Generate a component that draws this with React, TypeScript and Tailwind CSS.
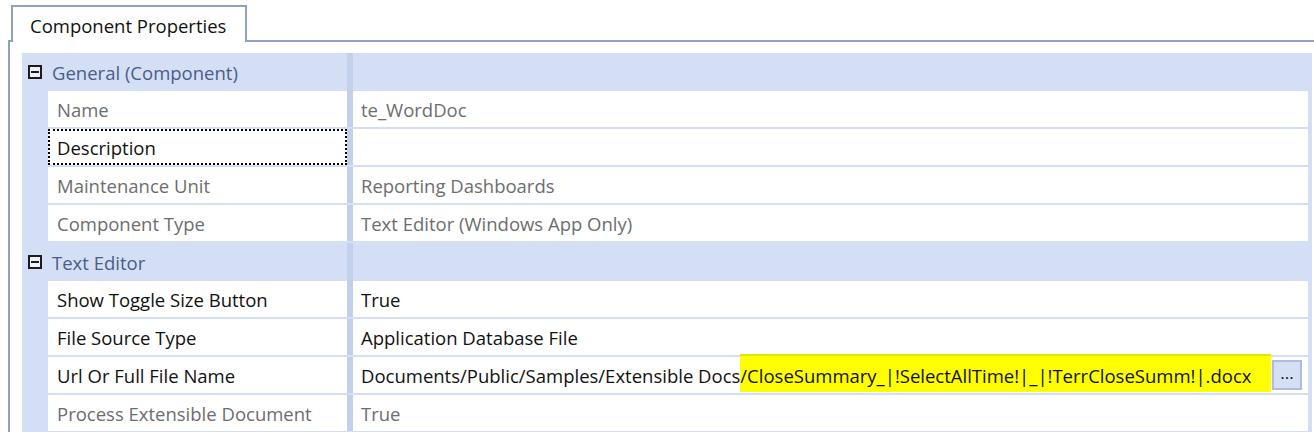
import React from 'react';

// Property grid rows
type Row = {
    label: string;
    value?: string;
    muted?: boolean;
    focused?: boolean;
    editor?: boolean;
};

type Group = { title: string; rows: Row[] };

const groups: Group[] = [
    {
        title: 'General (Component)',
        rows: [
            { label: 'Name', value: 'te_WordDoc', muted: true },
            { label: 'Description', value: '', focused: true },
            { label: 'Maintenance Unit', value: 'Reporting Dashboards', muted: true },
            { label: 'Component Type', value: 'Text Editor (Windows App Only)', muted: true },
        ],
    },
    {
        title: 'Text Editor',
        rows: [
            { label: 'Show Toggle Size Button', value: 'True' },
            { label: 'File Source Type', value: 'Application Database File' },
            { label: 'Url Or Full File Name', editor: true },
            { label: 'Process Extensible Document', value: 'True', muted: true },
        ],
    },
];

function CollapseBox() {
    return (
        <span className="w-[14px] h-[14px] border-2 border-[#1c1c1c] bg-[#eef1f8] flex items-center justify-center">
            <span className="w-[8px] h-[2px] bg-[#1c1c1c]" />
        </span>
    );
}

function GroupHeader({ title }: { title: string }) {
    return (
        <div className="flex h-[38px]">
            <div className="w-[325px] flex items-center pl-[6px] gap-[10px]">
                <CollapseBox />
                <span className="text-[#4b5d86] pt-[2px]">{title}</span>
            </div>
            <div className="w-[6px] bg-[#c3d0ea]" />
            <div className="flex-1" />
        </div>
    );
}

function PropertyRow({ row }: { row: Row }) {
    const tone = row.muted ? 'text-[#6d6d6d]' : 'text-[#111]';
    return (
        <div className="flex h-[38px] pb-[2px]">
            <div className="w-[26px]" />
            <div
                className={
                    row.focused
                        ? 'w-[299px] bg-white flex items-center pl-[7px] pt-[2px] border-2 border-dotted border-black ' + tone
                        : 'w-[299px] bg-white flex items-center pl-[9px] pt-[2px] ' + tone
                }
            >
                {row.label}
            </div>
            <div className="w-[6px] bg-[#c3d0ea]" />
            {row.editor ? (
                <div className="flex-1 bg-white flex items-center pl-[8px] text-[#111] whitespace-nowrap">
                    <span className="pt-[2px]">Documents/Public/Samples/Extensible Docs</span>
                    <span className="self-stretch -mt-[3px] mb-[1px] pr-[20px] pt-[3px] bg-[#ffff00] border-t-2 border-[#e4e400] flex items-center">
                        /CloseSummary_|!SelectAllTime!|_|!TerrCloseSumm!|.docx
                    </span>
                    <button className="ml-auto mr-[6px] w-[30px] h-[30px] bg-[#d4dff6] border-2 border-[#adbddd] flex items-center justify-center text-[17px] leading-none pb-[6px] text-[#111]">
                        ...
                    </button>
                </div>
            ) : (
                <div className={'flex-1 bg-white flex items-center pl-[8px] pt-[2px] ' + tone}>{row.value}</div>
            )}
            <div className="w-[4px]" />
        </div>
    );
}

export default function App() {
    return (
        <div
            className="w-[1314px] h-[432px] bg-white overflow-hidden text-[18.5px]"
            style={{ fontFamily: '"Open Sans", "Noto Sans", sans-serif' }}
        >
            {/* Tab strip */}
            <div className="h-[40px] pl-[11px] pt-[5px] flex">
                <div className="relative z-10 w-[236px] h-[37px] bg-white border-2 border-b-0 border-[#8da2c3] pl-[17px] pt-[3px] flex items-center text-[#111]">
                    Component Properties
                </div>
            </div>

            {/* Panel */}
            <div className="ml-[8px] border-l-2 border-t-2 border-[#8da2c3] pl-[12px] pt-[11px] h-[392px]">
                <div className="w-[1290px] bg-[#d4dff6]">
                    {groups.map((g) => (
                        <div key={g.title}>
                            <GroupHeader title={g.title} />
                            {g.rows.map((r) => (
                                <PropertyRow key={r.label} row={r} />
                            ))}
                        </div>
                    ))}
                </div>
            </div>
        </div>
    );
}
